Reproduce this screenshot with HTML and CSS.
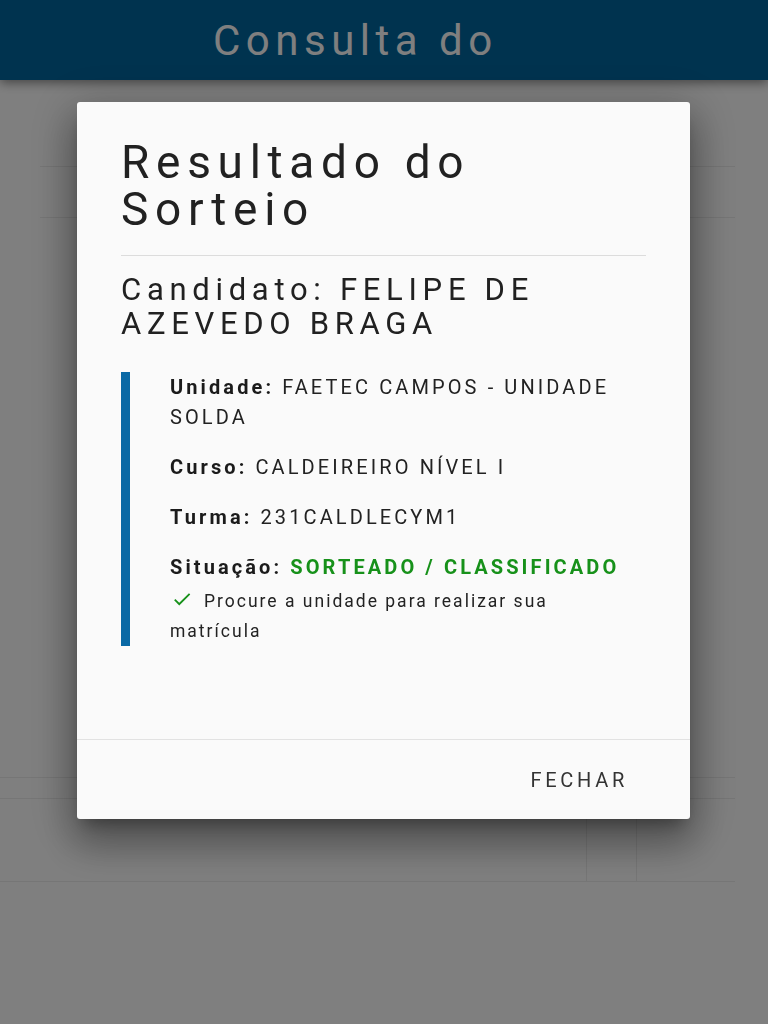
FILE: index.html
```html
<!DOCTYPE html>
<html lang="pt-BR">
<head>
<meta charset="utf-8">
<title>Consulta do Sorteio</title>
<link rel="stylesheet" href="styles.css">
</head>
<body>
<header class="topbar">
  <h1 class="topbar-title">Consulta do</h1>
</header>
<main class="page">
  <div class="bg-row bg-row-top"></div>
  <div class="bg-table">
    <div class="bg-tr"><span class="bg-td"></span><span class="bg-td bg-td-sm"></span><span class="bg-td bg-td-end"></span></div>
    <div class="bg-tr bg-tr-tall"><span class="bg-td"></span><span class="bg-td bg-td-sm"></span><span class="bg-td bg-td-end"></span></div>
  </div>
</main>

<div class="overlay"></div>

<section class="dialog" role="dialog" aria-labelledby="dlg-title">
  <div class="dialog-body">
    <h2 class="dialog-title" id="dlg-title">Resultado do Sorteio</h2>
    <h3 class="candidate">Candidato: FELIPE DE AZEVEDO BRAGA</h3>
    <div class="info">
      <p class="info-line"><strong>Unidade:</strong> FAETEC CAMPOS - UNIDADE SOLDA</p>
      <p class="info-line"><strong>Curso:</strong> CALDEIREIRO NÍVEL I</p>
      <p class="info-line"><strong>Turma:</strong> 231CALDLECYM1</p>
      <p class="info-line info-line-tight"><strong>Situação:</strong> <span class="status">SORTEADO / CLASSIFICADO</span></p>
      <p class="note"><svg class="check" viewBox="0 0 24 24" width="22" height="22" aria-hidden="true"><path d="M9 16.2L4.8 12l-1.4 1.4L9 19 21 7l-1.4-1.4L9 16.2z"/></svg>Procure a unidade para realizar sua matrícula</p>
    </div>
  </div>
  <footer class="dialog-actions">
    <button class="btn-text" type="button">FECHAR</button>
  </footer>
</section>
</body>
</html>
```

FILE: styles.css
```css
* { box-sizing: border-box; }

html, body {
  margin: 0;
  padding: 0;
}

body {
  width: 768px;
  height: 1024px;
  overflow: hidden;
  background: #ffffff;
  font-family: Roboto, "Liberation Sans", Arial, sans-serif;
  color: #212121;
}

/* ---------- page underneath ---------- */
.topbar {
  height: 80px;
  background: #00669f;
  display: flex;
  align-items: center;
  padding-left: 213px;
  box-shadow: 0 3px 10px rgba(0, 0, 0, 0.45);
  position: relative;
  z-index: 1;
}

.topbar-title {
  margin: 0;
  font-weight: 400;
  font-size: 42px;
  letter-spacing: 5.5px;
  color: #ffffff;
}

.page {
  padding: 86px 33px 0 40px;
}

.bg-row-top {
  height: 52px;
  border-top: 1px solid #ececec;
  border-bottom: 1px solid #ececec;
}

.bg-table {
  margin-top: 559px;
  margin-left: -40px;
  margin-right: 0;
}

.bg-tr {
  display: flex;
  height: 21px;
  border-top: 1px solid #ececec;
}

.bg-tr-tall {
  height: 84px;
  border-bottom: 1px solid #ececec;
}

.bg-td {
  flex: 1;
  border-right: 1px solid #ececec;
}

.bg-td-sm {
  flex: 0 0 50px;
}

.bg-td-end {
  flex: 0 0 98px;
  border-right: 0;
}

/* ---------- modal ---------- */
.overlay {
  position: fixed;
  inset: 0;
  background: rgba(0, 0, 0, 0.5);
  z-index: 2;
}

.dialog {
  position: fixed;
  left: 77px;
  top: 102px;
  width: 613px;
  z-index: 3;
  background: #fafafa;
  border-radius: 3px;
  box-shadow:
    0 24px 38px 3px rgba(0, 0, 0, 0.26),
    0 9px 46px 8px rgba(0, 0, 0, 0.2),
    0 11px 15px -7px rgba(0, 0, 0, 0.3);
}

.dialog-body {
  padding: 37px 44px 93px 44px;
  border-bottom: 1px solid #e2e2e2;
}

.dialog-title {
  margin: 0;
  padding-bottom: 22px;
  border-bottom: 1px solid #dcdcdc;
  font-weight: 400;
  font-size: 46px;
  line-height: 47px;
  letter-spacing: 6.7px;
  color: #212121;
}

.candidate {
  margin: 17px 0 0;
  font-weight: 400;
  font-size: 31px;
  line-height: 34px;
  letter-spacing: 5.7px;
  color: #212121;
}

.info {
  margin-top: 31px;
  border-left: 9px solid #0a69a5;
  padding: 0 22px 0 40px;
  font-size: 20px;
  line-height: 30px;
  color: #222222;
  letter-spacing: 3.1px;
}

.info-line {
  margin: 0 0 20px;
}

.info-line strong {
  font-weight: 700;
  color: #1b1b1b;
}

.info-line-tight {
  margin-bottom: 4px;
}

.status {
  font-weight: 700;
  color: #17911a;
}

.note {
  margin: 0;
  font-size: 17.5px;
  line-height: 30px;
  letter-spacing: 2px;
}

.check {
  fill: #17911a;
  vertical-align: -3px;
  margin: 0 11px 0 1px;
}

.dialog-actions {
  height: 79px;
  display: flex;
  justify-content: flex-end;
  align-items: center;
  padding-right: 54px;
}

.btn-text {
  border: 0;
  background: transparent;
  padding: 8px 8px;
  font-family: Roboto, "Liberation Sans", Arial, sans-serif;
  font-size: 20px;
  letter-spacing: 3.7px;
  color: #333333;
  cursor: pointer;
}
```
